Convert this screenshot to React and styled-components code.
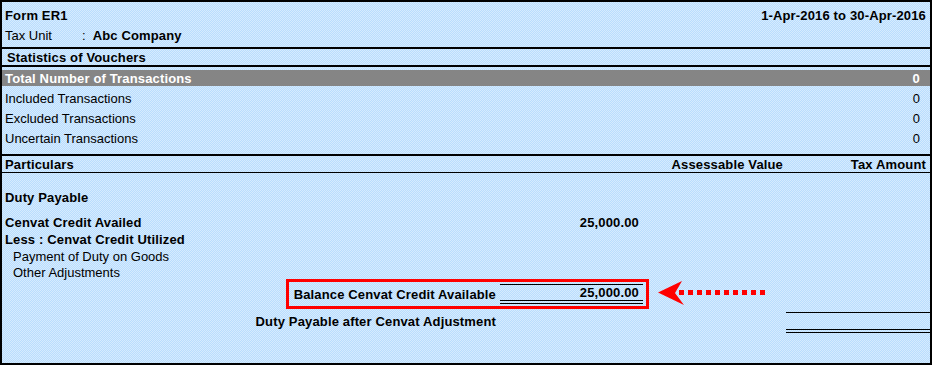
import React from "react";
import styled, { createGlobalStyle } from "styled-components";

const Global = createGlobalStyle`
  html, body { margin: 0; padding: 0; background: #ffffff; }
  body { font-family: "Liberation Sans", Arial, sans-serif; font-size: 13px; color: #000; }
  * { box-sizing: border-box; }
`;

const Frame = styled.div`
  width: 932px;
  height: 365px;
  border: 2px solid #000;
  display: flex;
  flex-direction: column;
  background: repeating-conic-gradient(#b9ddfd 0 25%, #d6ebfe 0 50%) 0 0 / 2px 2px;
  overflow: hidden;
`;

const Header = styled.div`
  flex: none;
  padding: 3px 4px 2px 3px;
  border-bottom: 2px solid #000;
  display: flex;
  flex-direction: column;
`;

const HeaderRow = styled.div`
  height: 20px;
  display: flex;
  align-items: center;
  justify-content: ${(p) => (p.$start ? "flex-start" : "space-between")};
`;

const Bold = styled.span`
  font-weight: bold;
  letter-spacing: 0.15px;
`;

const UnitLabel = styled.span`
  width: 77px;
`;

const UnitValue = styled(Bold)`
  margin-left: 7px;
`;

const Plain = styled.span``;

const SectionTitle = styled.div`
  flex: none;
  height: 18px;
  padding-left: 5px;
  display: flex;
  align-items: center;
  font-weight: bold;
  letter-spacing: 0.15px;
  border-bottom: 2px solid #000;
`;

const StatsList = styled.div`
  flex: none;
  display: flex;
  flex-direction: column;
  gap: 4px;
  padding: 3px 0 8px;
  border-bottom: 2px solid #000;
`;

const StatRow = styled.div`
  height: 16px;
  display: flex;
  align-items: center;
  justify-content: space-between;
  padding: 0 10px 0 3px;
  background: ${(p) => (p.$active ? "#858585" : "transparent")};
  color: ${(p) => (p.$active ? "#ffffff" : "#000")};
  font-weight: ${(p) => (p.$active ? "bold" : "normal")};
  letter-spacing: ${(p) => (p.$active ? "0.15px" : "0")};
`;

const GridRow = styled.div`
  flex: none;
  display: grid;
  grid-template-columns: 496px 147px 141px 144px;
  height: ${(p) => p.$h}px;
  align-items: center;
`;

const ColHead = styled(GridRow)`
  border-bottom: 1px solid #000;
`;

const NameCell = styled.div`
  padding-left: ${(p) => p.$indent || 3}px;
  text-align: ${(p) => (p.$right ? "right" : "left")};
  padding-right: ${(p) => (p.$right ? 2 : 0)}px;
  font-weight: ${(p) => (p.$bold ? "bold" : "normal")};
  letter-spacing: ${(p) => (p.$bold ? "0.15px" : "0")};
  white-space: nowrap;
`;

const NumCell = styled.div`
  text-align: right;
  padding-right: ${(p) => p.$pr || 4}px;
  font-weight: bold;
  letter-spacing: 0.15px;
  white-space: nowrap;
`;

const TotalCell = styled.div`
  position: relative;
  align-self: start;
  margin: ${(p) => p.$mt}px 2px 0;
  height: 17px;
  border-top: 1px solid #000;
  border-bottom: 1px solid #000;
  text-align: right;
  padding-right: 4px;
  font-weight: bold;
  letter-spacing: 0.15px;
  line-height: 15px;
  &::after {
    content: "";
    position: absolute;
    left: 0;
    right: 0;
    bottom: -4px;
    height: 1px;
    background: #000;
  }
`;

const TaxTotal = styled(TotalCell)`
  margin: ${(p) => p.$mt}px 0 0;
  height: 18px;
`;

const Body = styled.div`
  position: relative;
  flex: 1;
  display: flex;
  flex-direction: column;
`;

const Spacer = styled.div`
  flex: none;
  height: ${(p) => p.$h}px;
`;

const Highlight = styled.div`
  position: absolute;
  left: 284px;
  top: 106px;
  width: 363px;
  height: 30px;
  border: 3px solid #ff0000;
  pointer-events: none;
`;

const Arrow = styled.svg`
  position: absolute;
  left: 654px;
  top: 106px;
  width: 112px;
  height: 30px;
`;

const Cell = styled.div``;

const stats = [
  { label: "Total Number of Transactions", value: "0", active: true },
  { label: "Included Transactions", value: "0" },
  { label: "Excluded Transactions", value: "0" },
  { label: "Uncertain Transactions", value: "0" },
];

export default function App() {
  const dots = Array.from({ length: 10 }, (_, i) => 23 + i * 9);
  return (
    <>
      <Global />
      <Frame>
        <Header>
          <HeaderRow>
            <Bold>Form ER1</Bold>
            <Bold>1-Apr-2016 to 30-Apr-2016</Bold>
          </HeaderRow>
          <HeaderRow $start>
            <UnitLabel>Tax Unit</UnitLabel>
            <Plain>:</Plain>
            <UnitValue>Abc Company</UnitValue>
          </HeaderRow>
        </Header>
        <SectionTitle>Statistics of Vouchers</SectionTitle>
        <StatsList>
          {stats.map((s) => (
            <StatRow key={s.label} $active={s.active}>
              <span>{s.label}</span>
              <span>{s.value}</span>
            </StatRow>
          ))}
        </StatsList>
        <ColHead $h={17}>
          <NameCell $bold>Particulars</NameCell>
          <Cell />
          <NumCell $pr={3}>Assessable Value</NumCell>
          <NumCell $pr={4}>Tax Amount</NumCell>
        </ColHead>
        <Body>
          <Spacer $h={16} />
          <GridRow $h={16}>
            <NameCell $bold>Duty Payable</NameCell>
          </GridRow>
          <Spacer $h={9} />
          <GridRow $h={17}>
            <NameCell $bold>Cenvat Credit Availed</NameCell>
            <NumCell $pr={6}>25,000.00</NumCell>
          </GridRow>
          <GridRow $h={17}>
            <NameCell $bold>Less : Cenvat Credit Utilized</NameCell>
          </GridRow>
          <GridRow $h={17}>
            <NameCell $indent={11}>Payment of Duty on Goods</NameCell>
          </GridRow>
          <GridRow $h={14}>
            <NameCell $indent={11}>Other Adjustments</NameCell>
          </GridRow>
          <GridRow $h={30}>
            <NameCell $bold $right>Balance Cenvat Credit Available</NameCell>
            <TotalCell $mt={5}>25,000.00</TotalCell>
          </GridRow>
          <GridRow $h={24}>
            <NameCell $bold $right>Duty Payable after Cenvat Adjustment</NameCell>
            <Cell />
            <Cell />
            <TaxTotal $mt={3} />
          </GridRow>
          <Highlight />
          <Arrow viewBox="0 0 112 30">
            <polygon points="2,13.5 26,2 19,14 28,26" fill="#ff0000" />
            {dots.map((x) => (
              <rect key={x} x={x} y={11} width={5} height={5} fill="#ff0000" />
            ))}
          </Arrow>
        </Body>
      </Frame>
    </>
  );
}
